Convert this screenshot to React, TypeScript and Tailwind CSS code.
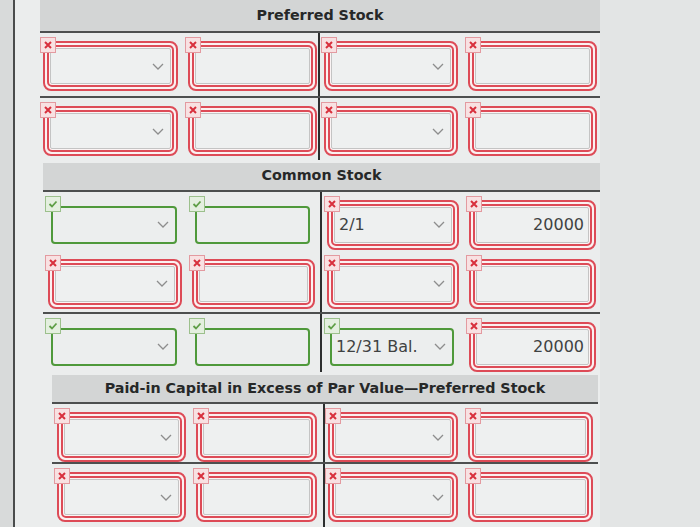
import type { ReactNode } from "react";

type Cell = { ok?: boolean; value?: string };

function Badge({ ok }: { ok?: boolean }) {
	return ok ? (
		<div className="absolute -left-[3px] -top-[4px] z-10 flex h-[16px] w-[16px] items-center justify-center border border-[#9cc08c] bg-[#e4efdf]">
			<svg width="10" height="8" viewBox="0 0 10 8">
				<polyline points="1.5,4 4,6.5 8.5,1.5" fill="none" stroke="#5e9e45" strokeWidth="1.8" />
			</svg>
		</div>
	) : (
		<div className="absolute -left-[3px] -top-[4px] z-10 flex h-[16px] w-[16px] items-center justify-center border border-[#e39aa0] bg-[#f8e1e2]">
			<svg width="8" height="8" viewBox="0 0 8 8">
				<path d="M1 1 L7 7 M7 1 L1 7" stroke="#d8303d" strokeWidth="2" />
			</svg>
		</div>
	);
}

function Chevron() {
	return (
		<svg width="12" height="7" viewBox="0 0 12 7" className="ml-auto mr-[6px] shrink-0">
			<polyline points="1,1 6,6 11,1" fill="none" stroke="#8d8d8d" strokeWidth="1.3" />
		</svg>
	);
}

// one field: dropdown or plain input, red double border when wrong, green when right
function Field({ cell, drop, w }: { cell: Cell; drop?: boolean; w: string }) {
	const inner: ReactNode = (
		<>
			{cell.value && (
				<span
					className={`text-[16px] leading-none text-[#3f4242] ${drop ? "pl-[4px]" : "ml-auto pr-[4px]"}`}
				>
					{cell.value}
				</span>
			)}
			{drop && <Chevron />}
		</>
	);
	return (
		<div className={`relative h-[50px] shrink-0 ${w}`}>
			{cell.ok ? (
				<div className="absolute inset-y-[6px] left-[3px] right-[5px] flex items-center rounded-[4px] border-2 border-[#4f993b] bg-[#eceeee]">
					{inner}
				</div>
			) : (
				<div className="absolute inset-0 rounded-[8px] border-2 border-[#dd4b57] bg-[#fbf1f1] p-[2px]">
					<div className="h-full rounded-[5px] border-2 border-[#dd4b57] bg-[#fbf4f4] p-[1px]">
						<div className="flex h-full items-center rounded-[2px] border border-[#c4c4c4] bg-[#eef0f0]">
							{inner}
						</div>
					</div>
				</div>
			)}
			<Badge ok={cell.ok} />
		</div>
	);
}

function Header({ title, h }: { title: string; h: string }) {
	return (
		<div
			className={`flex items-center justify-center border-b-2 border-[#4d4f4f] bg-[#d3d5d5] text-[14.3px] font-bold text-[#262828] ${h}`}
		>
			{title}
		</div>
	);
}

type Sizes = {
	left: string;
	lpad: string;
	rpad: string;
	ld: string;
	li: string;
	rd: string;
	ri: string;
};

function Row({
	cells,
	h,
	line,
	s,
}: {
	cells: [Cell, Cell, Cell, Cell];
	h: string;
	line?: boolean;
	s: Sizes;
}) {
	return (
		<div className={`flex ${h} ${line ? "border-b-2 border-[#4d4f4f]" : ""}`}>
			<div className={`flex shrink-0 gap-[10px] border-r-2 border-[#2c2e2e] pt-[8px] ${s.left} ${s.lpad}`}>
				<Field cell={cells[0]} drop w={s.ld} />
				<Field cell={cells[1]} w={s.li} />
			</div>
			<div className={`flex flex-1 gap-[10px] pt-[8px] ${s.rpad}`}>
				<Field cell={cells[2]} drop w={s.rd} />
				<Field cell={cells[3]} w={s.ri} />
			</div>
		</div>
	);
}

const bad: Cell = {};
const good: Cell = { ok: true };

const s1: Sizes = {
	left: "w-[280px]",
	lpad: "pl-[3px]",
	rpad: "pl-[4px]",
	ld: "w-[135px]",
	li: "w-[129px]",
	rd: "w-[134px]",
	ri: "w-[129px]",
};
const s2: Sizes = {
	left: "w-[279px]",
	lpad: "pl-[5px]",
	rpad: "pl-[5px]",
	ld: "w-[134px]",
	li: "w-[123px]",
	rd: "w-[132px]",
	ri: "w-[127px]",
};
const s3: Sizes = {
	left: "w-[273px]",
	lpad: "pl-[5px]",
	rpad: "pl-[3px]",
	ld: "w-[129px]",
	li: "w-[121px]",
	rd: "w-[130px]",
	ri: "w-[125px]",
};

export default function App() {
	return (
		<div className="flex h-[527px] w-[700px] overflow-hidden bg-[#e3e5e5] font-['DejaVu_Sans','Liberation_Sans',sans-serif]">
			<div className="w-[13px] shrink-0 bg-[#d8dada]" />
			<div className="w-[2px] shrink-0 bg-[#4a4c4c]" />
			<div className="flex w-[585px] shrink-0 flex-col bg-[#ebeded]">
				{/* Preferred Stock */}
				<div className="ml-[25px] w-[560px]">
					<Header title="Preferred Stock" h="h-[33px]" />
					<Row cells={[bad, bad, bad, bad]} h="h-[65px]" line s={s1} />
					<Row cells={[bad, bad, bad, bad]} h="h-[62px]" s={s1} />
				</div>
				<div className="h-[3px]" />
				{/* Common Stock */}
				<div className="ml-[28px] w-[557px]">
					<Header title="Common Stock" h="h-[29px]" />
					<Row
						cells={[good, good, { value: "2/1" }, { value: "20000" }]}
						h="h-[59px]"
						s={s2}
					/>
					<Row cells={[bad, bad, bad, bad]} h="h-[63px]" line s={s2} />
					<Row
						cells={[good, good, { ok: true, value: "12/31 Bal." }, { value: "20000" }]}
						h="h-[58px]"
						s={s2}
					/>
				</div>
				<div className="h-[4px]" />
				{/* Paid-in Capital */}
				<div className="ml-[37px] w-[546px]">
					<Header title="Paid-in Capital in Excess of Par Value—Preferred Stock" h="h-[29px]" />
					<Row cells={[bad, bad, bad, bad]} h="h-[60px]" line s={s3} />
					<Row cells={[bad, bad, bad, bad]} h="h-[63px]" s={s3} />
				</div>
			</div>
			<div className="flex-1" />
		</div>
	);
}
